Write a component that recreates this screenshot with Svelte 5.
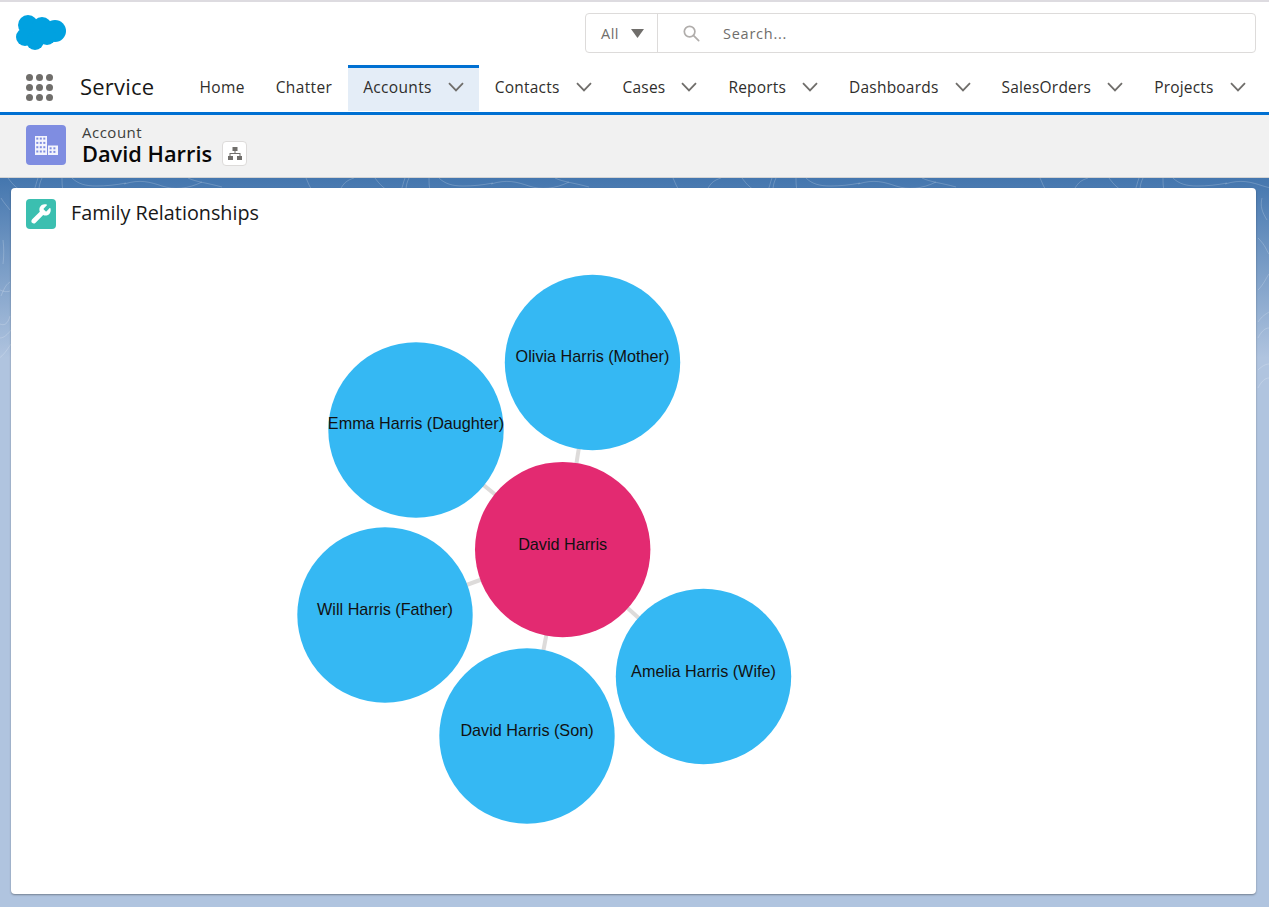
<script>
  const tabs = [
    { label: "Home" },
    { label: "Chatter" },
    { label: "Accounts", menu: true, active: true },
    { label: "Contacts", menu: true },
    { label: "Cases", menu: true },
    { label: "Reports", menu: true },
    { label: "Dashboards", menu: true },
    { label: "SalesOrders", menu: true },
    { label: "Projects", menu: true },
  ];

  // diagram coordinates, relative to the card; ty nudges the label
  const root = { x: 551.7, y: 361.6, ty: 0.4, label: "David Harris" };
  const relatives = [
    { x: 581.5, y: 174.5, ty: -0.5, label: "Olivia Harris (Mother)" },
    { x: 405, y: 242, ty: -1, label: "Emma Harris (Daughter)" },
    { x: 374, y: 427, ty: -0.5, label: "Will Harris (Father)" },
    { x: 516, y: 548, ty: -0.5, label: "David Harris (Son)" },
    { x: 692.5, y: 488.5, ty: 0.5, label: "Amelia Harris (Wife)" },
  ];
  const dots = [0, 1, 2, 3, 4, 5, 6, 7, 8];
  const bgOffsets = [0, 367, 734, 1101];

  // window holes of the building icon
  const holes = [];
  for (let row = 0; row < 4; row++) {
    for (let col = 0; col < 3; col++) {
      holes.push({ x: 1.3 + col * 3.5, y: 1.6 + row * 4.3 });
    }
  }
  for (let row = 0; row < 2; row++) {
    for (let col = 0; col < 2; col++) {
      holes.push({ x: 14.6 + col * 3.8, y: 11.3 + row * 3.6 });
    }
  }
</script>

<div class="page">
  <header class="top">
    <div class="brand-row">
      <svg class="logo" viewBox="15 14 52 37" width="52" height="37" aria-label="Salesforce" fill="#00a1e0">
        <circle cx="28" cy="25" r="10" />
        <circle cx="42" cy="27" r="10" />
        <circle cx="55" cy="31" r="11" />
        <circle cx="25" cy="37" r="9" />
        <circle cx="35" cy="41" r="9" />
        <circle cx="47" cy="36" r="9" />
      </svg>
      <div class="search">
        <div class="scope">
          <span>All</span>
          <svg viewBox="0 0 13 9" width="13" height="9"><path d="M0 0h13L6.500 9z" fill="#706e6b" /></svg>
        </div>
        <div class="query">
          <svg viewBox="0 0 18 18" width="17" height="17" fill="none" stroke="#b0adab" stroke-width="1.8">
            <circle cx="7" cy="7" r="5.6" />
            <path d="M11 11l5.6 5.6" stroke-linecap="round" />
          </svg>
          <span class="placeholder">Search...</span>
        </div>
      </div>
    </div>
    <nav class="nav">
      <div class="launcher">
        {#each dots as d (d)}<i></i>{/each}
      </div>
      <div class="app-name">Service</div>
      <div class="tabs">
        {#each tabs as tab, i}
          <div class="tab" class:active={tab.active} class:lead={i < 3}>
            <span>{tab.label}</span>
            {#if tab.menu}
              <svg viewBox="0 0 16 10" width="16" height="10" fill="none" stroke="#706e6b" stroke-width="1.8">
                <path d="M1 1.200l7 7.200 7-7.200" />
              </svg>
            {/if}
          </div>
        {/each}
      </div>
    </nav>
  </header>

  <section class="highlights">
    <div class="account-icon">
      <svg viewBox="0 0 23 19" width="23" height="19">
        <path d="M0 0h12v19H0zM13 9.500h10V19H13z" fill="#f3f4fc" />
        {#each holes as h}
          <rect x={h.x} y={h.y} width="2" height="2" fill="#7f8de1" />
        {/each}
      </svg>
    </div>
    <div class="titles">
      <div class="type">Account</div>
      <div class="name">David Harris</div>
    </div>
    <button class="hierarchy" aria-label="View hierarchy">
      <svg viewBox="0 0 14 13" width="14" height="13" fill="#706e6b">
        <path d="M4.500 0h5v4h-2v2H12.500v3H14v4H9V9h2.500V7h-9v2H5v4H0V9h1.500V6h5V4h-2z" />
      </svg>
    </button>
  </section>

  <main class="content">
    <svg class="contours" width="1269" height="240" fill="none" stroke="#fff" stroke-opacity=".2">
      {#each bgOffsets as dx}
        <g transform="translate({dx} 0)">
          <path d="M8 0c3 4 6 8 12 12M38 0c-2 5-2 8-4 12M42 0c-2 4-3 8-3 12M62 0c0 4 0 8 1 12" />
          <path d="M72 0c6 6 14 8 24 8s20-1 30-3M124 6c16-5 26-2 38 2s26 3 40-4" />
          <path d="M188 0c8 4 20 5 34 9M306 0c2 4 3 8 6 12M340 12c4-8 8-10 14-12" />
        </g>
      {/each}
      <path d="M1 20c3 5 6 8 9 12M3 62c1 8 1 16 0 24M1 118c4-10 6-12 9-14" />
      <path d="M0 112c4 2 8 2 10 1M0 146c4 2 8 0 10-8M0 160c4 0 8-4 11-8M-1 180c4-2 8-8 12-14" />
      <path d="M1262 20c-2 8 0 14 5 22M1258 60c8 8 8 12 11 16M1258 112c6-6 8-12 11-16M1258 144c4-6 8-8 11-10M1258 160c4-8 8-10 11-10" />
      <path d="M1258 192c4-4 8-6 11-6M1258 210c4-8 8-10 11-10" />
    </svg>
    <article class="card">
      <div class="card-head">
        <div class="tool-icon">
          <svg viewBox="0 0 20 20" width="20" height="20" fill="#fff">
            <path d="M19.400 4.300c-.100-.300-.500-.400-.7-.2l-3.100 3.100c-.300.300-.700.300-1 0l-1.800-1.800c-.300-.300-.300-.700 0-1L15.900 1.300c.200-.200.100-.600-.2-.7C12.900-.3 9.700.800 8.700 3.600c-.500 1.400-.400 2.900.1 4.100L1.200 15.300c-1.100 1.100-1.100 2.500-.1 3.500s2.400 1 3.500-.1l7.600-7.600c1.300.600 2.800.700 4.200.2 2.800-1 3.900-4.200 3-7z" />
          </svg>
        </div>
        <h2>Family Relationships</h2>
      </div>
      <svg class="graph" width="1244" height="706">
        {#each relatives as node}
          <line x1={root.x} y1={root.y} x2={node.x} y2={node.y} stroke="#dddbda" stroke-width="4" />
        {/each}
        {#each relatives as node}
          <circle cx={node.x} cy={node.y} r="87.7" fill="#35b8f3" />
          <text x={node.x} y={node.y + node.ty}>{node.label}</text>
        {/each}
        <circle cx={root.x} cy={root.y} r="87.7" fill="#e32a71" />
        <text x={root.x} y={root.y + root.ty}>{root.label}</text>
      </svg>
    </article>
  </main>
</div>

<style>
  :global(body) {
    margin: 0;
    background: #b0c4df;
  }

  .page {
    width: 1269px;
    height: 907px;
    overflow: hidden;
    display: flex;
    flex-direction: column;
    font-family: "Open Sans", "Noto Sans", sans-serif;
    color: #080707;
  }

  .top {
    box-sizing: border-box;
    height: 115px;
    flex: none;
    background: #fff;
    border-top: 2px solid #dddbe0;
    border-bottom: 3px solid #0070d2;
  }

  .brand-row {
    box-sizing: border-box;
    height: 63px;
    display: flex;
    align-items: flex-start;
    justify-content: space-between;
    padding: 11px 13px 0 15px;
  }

  .logo {
    margin-top: 1px;
  }

  .search {
    width: 671px;
    height: 40px;
    box-sizing: border-box;
    display: flex;
    border: 1px solid #dddbda;
    border-radius: 4px;
    font-size: 14.5px;
    letter-spacing: 0.5px;
    color: #706e6b;
  }

  .scope {
    width: 72px;
    display: flex;
    align-items: center;
    gap: 12px;
    padding-left: 15px;
    box-sizing: border-box;
    border-right: 1px solid #dddbda;
  }

  .query {
    display: flex;
    align-items: center;
    gap: 23px;
    padding-left: 25px;
  }

  .placeholder {
    letter-spacing: 0.75px;
  }

  .nav {
    height: 47px;
    display: flex;
    align-items: flex-start;
  }

  .launcher {
    display: grid;
    grid-template-columns: repeat(3, 7px);
    gap: 3px;
    margin: 9px 0 0 26px;
  }

  .launcher i {
    width: 7px;
    height: 7px;
    border-radius: 50%;
    background: #706e6b;
  }

  .app-name {
    width: 104px;
    margin-left: 27px;
    font-size: 22px;
    letter-spacing: 0.2px;
    line-height: 42px;
    color: #181818;
  }

  .tabs {
    display: flex;
  }

  .tab {
    height: 46px;
    padding: 0 15.5px 5px;
    display: flex;
    align-items: center;
    gap: 16px;
    font-size: 15.5px;
    letter-spacing: 0.2px;
    color: #2f2e2c;
    box-sizing: border-box;
    border-top: 3px solid transparent;
  }

  .tab.lead {
    letter-spacing: 0.35px;
  }

  .tab.active {
    background: #e4edf7;
    border-top-color: #0070d2;
  }

  .highlights {
    height: 63px;
    flex: none;
    box-sizing: border-box;
    background: #f1f1f1;
    border-bottom: 1px solid #d4d4d4;
    display: flex;
    align-items: flex-start;
    padding: 10px 0 0 26px;
  }

  .account-icon {
    width: 40px;
    height: 40px;
    border-radius: 4px;
    background: #7f8de1;
    display: flex;
    align-items: center;
    justify-content: center;
  }

  .titles {
    margin-left: 16px;
  }

  .type {
    font-size: 15px;
    letter-spacing: 0.5px;
    line-height: 15px;
    color: #3e3e3c;
  }

  .name {
    font-size: 21.8px;
    font-weight: 600;
    line-height: 27px;
    color: #080707;
  }

  .hierarchy {
    width: 25px;
    height: 25px;
    margin: 16px 0 0 10px;
    padding: 0;
    display: flex;
    align-items: center;
    justify-content: center;
    background: #fff;
    border: 1px solid #dddbda;
    border-radius: 4px;
  }

  .content {
    position: relative;
    flex: 1;
    padding: 10px 13px 13px 11px;
    background: linear-gradient(#4476ae, #b0c4df 180px);
  }

  .contours {
    position: absolute;
    top: 0;
    left: 0;
  }

  .card {
    position: relative;
    height: 706px;
    background: #fff;
    border-radius: 4px;
    box-shadow: 0 1px 2px rgba(0, 0, 0, 0.35);
  }

  .card-head {
    position: absolute;
    top: 11px;
    left: 15px;
    display: flex;
    align-items: center;
    gap: 15px;
  }

  .tool-icon {
    width: 30px;
    height: 30px;
    border-radius: 4px;
    background: #3bbfb0;
    display: flex;
    align-items: center;
    justify-content: center;
  }

  h2 {
    margin: -2px 0 0;
    font-size: 19.8px;
    line-height: 28px;
    font-weight: 400;
    color: #181818;
  }

  .graph {
    display: block;
  }

  .graph text {
    font-family: "Liberation Sans", Arial, sans-serif;
    font-size: 16.2px;
    text-anchor: middle;
    fill: #111;
  }
</style>
